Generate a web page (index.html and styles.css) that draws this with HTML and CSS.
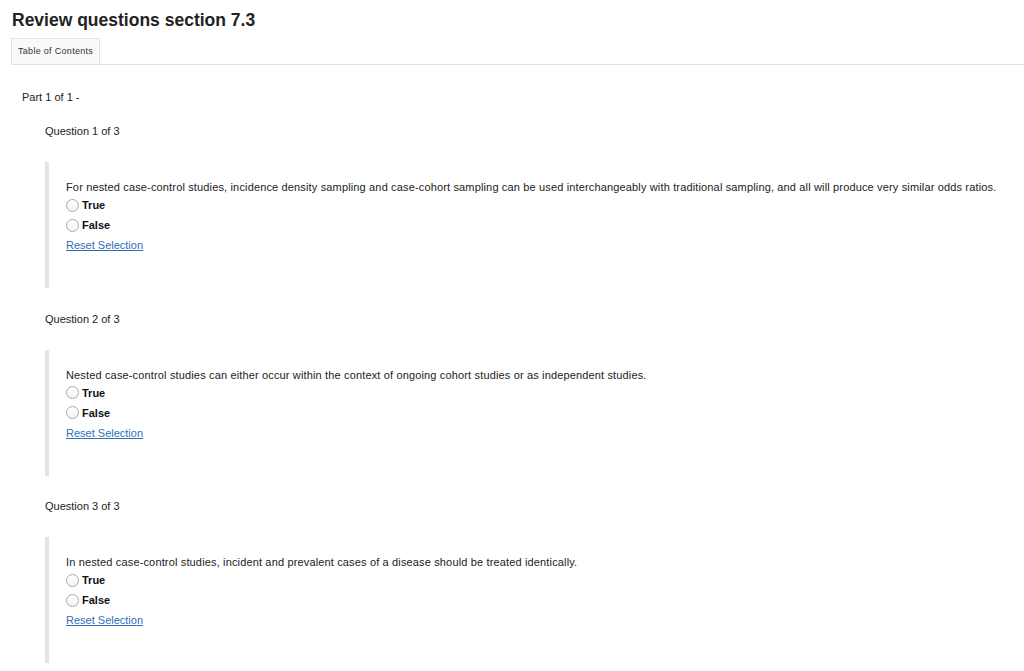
FILE: index.html
```html
<!DOCTYPE html>
<html>
<head>
<meta charset="utf-8">
<link rel="stylesheet" href="styles.css">
</head>
<body>
<h1 class="title">Review questions section 7.3</h1>
<div class="tabbar"><div class="tab">Table of Contents</div></div>
<div class="part">Part 1 of 1 -</div>

<div class="question">
  <div class="qlabel">Question 1 of 3</div>
  <div class="qbody">
    <div class="qtext">For nested case-control studies, incidence density sampling and case-cohort sampling can be used interchangeably with traditional sampling, and all will produce very similar odds ratios.</div>
    <label class="opt"><span class="radio"></span>True</label>
    <label class="opt"><span class="radio"></span>False</label>
    <div class="opt"><a class="reset" href="#">Reset Selection</a></div>
  </div>
</div>

<div class="question">
  <div class="qlabel">Question 2 of 3</div>
  <div class="qbody">
    <div class="qtext">Nested case-control studies can either occur within the context of ongoing cohort studies or as independent studies.</div>
    <label class="opt"><span class="radio"></span>True</label>
    <label class="opt"><span class="radio"></span>False</label>
    <div class="opt"><a class="reset" href="#">Reset Selection</a></div>
  </div>
</div>

<div class="question">
  <div class="qlabel">Question 3 of 3</div>
  <div class="qbody">
    <div class="qtext">In nested case-control studies, incident and prevalent cases of a disease should be treated identically.</div>
    <label class="opt"><span class="radio"></span>True</label>
    <label class="opt"><span class="radio"></span>False</label>
    <div class="opt"><a class="reset" href="#">Reset Selection</a></div>
  </div>
</div>
</body>
</html>
```
FILE: styles.css
```css
html, body {
  margin: 0;
  padding: 0;
  background: #fff;
}
body {
  font-family: "Liberation Sans", Arial, sans-serif;
  color: #222;
  font-size: 11px;
  overflow: hidden;
}
.title {
  margin: 0;
  padding: 9px 0 0 12px;
  font-size: 17.5px;
  line-height: 22px;
  font-weight: bold;
  color: #222;
}
.tabbar {
  margin: 7px 0 0 11px;
  border-bottom: 1px solid #e2e2e2;
  display: flex;
}
.tab {
  border: 1px solid #e2e2e2;
  border-bottom: none;
  background: #fafafa;
  font-size: 9px;
  letter-spacing: 0.3px;
  line-height: 25px;
  padding: 0 6px;
  color: #333;
}
.part {
  margin-top: 25px;
  padding-left: 22px;
  line-height: 14px;
}
.question {
  padding-left: 45px;
}
.qlabel {
  line-height: 14px;
  margin-top: 20px;
}
.question + .question .qlabel {
  margin-top: 23.5px;
}
.qbody {
  margin-top: 24px;
  border-left: 4px solid #e4e4e4;
  padding: 18px 0 33px 17px;
}
.qtext {
  line-height: 14px;
  margin-bottom: 1px;
  letter-spacing: 0.15px;
}
.opt {
  display: flex;
  align-items: center;
  height: 20px;
  font-weight: bold;
  color: #111;
}
.radio {
  width: 11px;
  height: 11px;
  border: 1px solid #a8a8a8;
  border-radius: 50%;
  background: linear-gradient(#fff, #f4f4f4);
  margin-right: 3px;
}
.reset {
  font-weight: normal;
  color: #2f6fb7;
  text-decoration: underline;
}
```
